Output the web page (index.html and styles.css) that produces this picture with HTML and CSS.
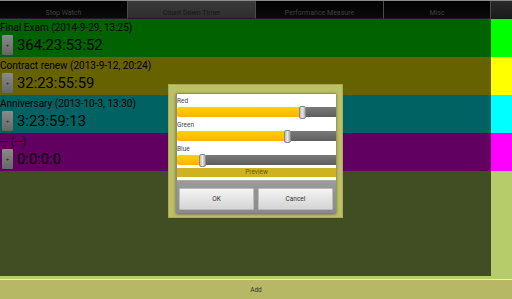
FILE: index.html
```html
<!DOCTYPE html>
<html lang="en">
<head>
  <meta charset="UTF-8" />
  <title>Count Down Timer</title>
  <link rel="stylesheet" href="styles.css">
</head>
<body>
  <div class="screen">
    <div class="tabs">
      <div class="tab">Stop Watch</div>
      <div class="tab active">Count Down Timer</div>
      <div class="tab">Performance Measure</div>
      <div class="tab">Misc</div>
      <div class="tab corner"></div>
    </div>

    <div class="timer green">
      <div class="timer-body">
        <div class="title">Final Exam (2014-9-29, 13:25)</div>
        <div class="count"><button class="plus">+</button><span>364:23:53:52</span></div>
      </div>
      <div class="swatch"></div>
    </div>

    <div class="timer olive">
      <div class="timer-body">
        <div class="title">Contract renew (2013-9-12, 20:24)</div>
        <div class="count"><button class="plus">+</button><span>32:23:55:59</span></div>
      </div>
      <div class="swatch"></div>
    </div>

    <div class="timer teal">
      <div class="timer-body">
        <div class="title">Anniversary (2013-10-3, 13:30)</div>
        <div class="count"><button class="plus">+</button><span>3:23:59:13</span></div>
      </div>
      <div class="swatch"></div>
    </div>

    <div class="timer purple">
      <div class="timer-body">
        <div class="title">--- (---)</div>
        <div class="count"><button class="plus">+</button><span>0:0:0:0</span></div>
      </div>
      <div class="swatch"></div>
    </div>

    <div class="timer filler">
      <div class="timer-body"></div>
      <div class="swatch"></div>
    </div>

    <div class="strip"></div>
    <div class="add">Add</div>

    <div class="dialog">
      <div class="panel">
        <div class="content">
          <div class="label">Red</div>
          <div class="slider"><div class="fill" style="width: 77%"></div><div class="thumb"></div><div class="rest"></div></div>
          <div class="label">Green</div>
          <div class="slider"><div class="fill" style="width: 67%"></div><div class="thumb"></div><div class="rest"></div></div>
          <div class="label">Blue</div>
          <div class="slider"><div class="fill" style="width: 14%"></div><div class="thumb"></div><div class="rest"></div></div>
          <div class="preview">Preview</div>
        </div>
        <div class="actions">
          <button>OK</button>
          <button>Cancel</button>
        </div>
      </div>
    </div>
  </div>
</body>
</html>
```

FILE: styles.css
```css
body {
  margin: 0;
  font-family: Roboto, "Liberation Sans", sans-serif;
  background: #000;
}

.screen {
  position: relative;
  width: 512px;
  height: 299px;
  overflow: hidden;
  display: flex;
  flex-direction: column;
}

.tabs {
  display: flex;
  height: 19px;
  border-top: 1px solid #8a8a8a;
  box-sizing: border-box;
  background: #000;
}

.tab {
  width: 128px;
  box-sizing: border-box;
  border-right: 1px solid #4a4a4a;
  border-bottom: 1px solid #1c1c1c;
  color: #404040;
  font-size: 7px;
  text-align: center;
  padding-top: 8px;
  background: linear-gradient(#000, #0b0b0b);
}

.tab.active {
  background: linear-gradient(#3a3a3a, #2e2e2e);
  color: #151515;
}

.tab.corner {
  width: 21px;
  border-right: none;
  background: linear-gradient(#2a2a2a, #1a1a1a);
}

.tabs .tab:nth-child(4) {
  width: 107px;
}

.timer {
  display: flex;
  height: 38px;
}

.timer-body {
  flex: 1;
  color: #000;
}

.swatch {
  width: 21px;
}

.green { background: #006200; }
.green .swatch { background: #00ff00; }
.olive { background: #666200; }
.olive .swatch { background: #ffff00; }
.teal { background: #006262; }
.teal .swatch { background: #00ffff; }
.purple { background: #620062; }
.purple .swatch { background: #ff00ff; }
.filler { background: #414d22; height: 105px; }
.filler .swatch { background: #b6cc6a; }

.title {
  font-size: 10px;
  line-height: 13px;
  padding-top: 2px;
  white-space: nowrap;
}

.count {
  display: flex;
  align-items: center;
  height: 20px;
  margin-top: 1px;
}

.count span {
  font-size: 14.8px;
  margin-left: 4px;
}

.plus {
  width: 11px;
  height: 20px;
  margin-left: 2px;
  padding: 0;
  border: none;
  border-radius: 1px;
  background: linear-gradient(#8a8a8a, #666);
  color: #222;
  font-size: 6px;
  line-height: 20px;
}

.strip {
  height: 3px;
  background: #b6cc6a;
}

.add {
  border-top: 1px solid #e6ecd0;
  flex: 1;
  background: #b6b866;
  color: #333;
  font-size: 6.5px;
  text-align: center;
  padding-top: 6px;
}

.dialog {
  position: absolute;
  left: 168px;
  top: 84px;
  width: 175px;
  height: 134px;
  box-sizing: border-box;
  padding: 8px 6px 0 7px;
  background: #bcc067;
  border: 1px solid #a8ac55;
}

.panel {
  background: #8c8c8c;
  padding: 1px 0 0 1px;
  box-shadow: 0 1px 3px rgba(0, 0, 0, 0.5);
}

.content {
  background: #fff;
  padding: 2px 0 3px;
}

.label {
  font-size: 6.5px;
  color: #444;
  height: 10px;
  line-height: 10px;
}

.slider {
  position: relative;
  display: flex;
  align-items: center;
  height: 12px;
  margin-bottom: 2px;
}

.fill {
  height: 10px;
  background: linear-gradient(#ffd000, #ffb400);
  border-radius: 2px 0 0 2px;
}

.rest {
  flex: 1;
  height: 10px;
  background: linear-gradient(#7a7a7a, #5e5e5e);
}

.thumb {
  width: 7px;
  height: 13px;
  box-sizing: border-box;
  border: 1px solid #8a8a8a;
  border-radius: 2px;
  background: linear-gradient(90deg, #bbb, #e8e8e8, #aaa);
}

.preview {
  margin-top: 1px;
  height: 9px;
  line-height: 9px;
  background: #cfb21f;
  color: #6a5a10;
  font-size: 6.5px;
  text-align: center;
}

.actions {
  display: flex;
  gap: 4px;
  padding: 7px 3px 3px 2px;
  border-top: 1px solid #aaa;
  background: linear-gradient(#9a9a9a, #8a8a8a);
}

.actions button {
  flex: 1;
  height: 22px;
  border: 1px solid #bbb;
  border-radius: 1px;
  background: linear-gradient(#f4f4f4, #d4d4d4);
  color: #333;
  font-family: Roboto, "Liberation Sans", sans-serif;
  font-size: 6.5px;
}
```
